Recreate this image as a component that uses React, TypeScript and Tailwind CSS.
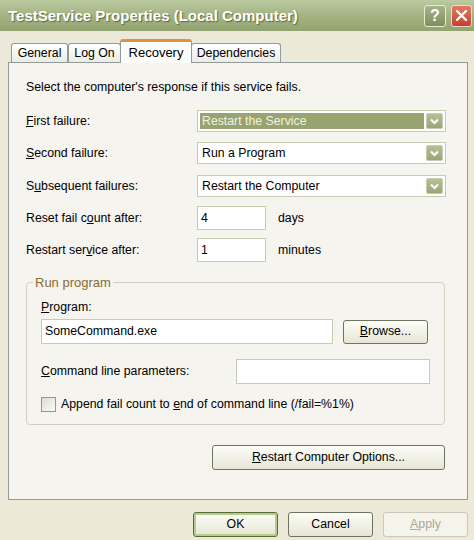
import type { ReactNode } from 'react';

const font = { fontFamily: '"Liberation Sans", Arial, sans-serif' };

export default function App() {
  return (
    <div className="h-[540px] w-[474px] overflow-hidden bg-[#ece9d8] text-[12.3px] leading-[15px] text-black" style={font}>
      <TitleBar />

      <div className="flex h-[31px] items-end pl-[11px]">
        <Tab label="General" width={57} />
        <Tab label="Log On" width={53} />
        <Tab label="Recovery" width={72} active />
        <Tab label="Dependencies" width={90} />
      </div>

      <section className="ml-[8px] flex h-[438px] w-[460px] flex-col border border-[#919b9c] bg-[#f5f4ef] px-[17px]">
        <p className="mt-[17px]">Select the computer's response if this service fails.</p>

        <FormRow className="mt-[15px]" label={<><u>F</u>irst failure:</>}>
          <Select value="Restart the Service" selected />
        </FormRow>
        <FormRow className="mt-[10px]" label={<><u>S</u>econd failure:</>}>
          <Select value="Run a Program" />
        </FormRow>
        <FormRow className="mt-[11px]" label={<>S<u>u</u>bsequent failures:</>}>
          <Select value="Restart the Computer" />
        </FormRow>
        <FormRow className="mt-[9px] h-[24px]" label={<>Reset fail c<u>o</u>unt after:</>}>
          <TextBox value="4" className="h-[24px] w-[69px]" />
          <span className="ml-[12px]">days</span>
        </FormRow>
        <FormRow className="mt-[8px] h-[24px]" label={<>Restart ser<u>v</u>ice after:</>}>
          <TextBox value="1" className="h-[24px] w-[69px]" />
          <span className="ml-[12px]">minutes</span>
        </FormRow>

        <fieldset className="mt-[13px] h-[150px] w-[419px] rounded-[4px] border border-[#d0d0bf] px-[14px]">
          <legend className="-ml-[8px] px-[2px] text-[13px] text-[#8a6a32]">Run program</legend>
          <p className="mt-[10px]"><u>P</u>rogram:</p>
          <div className="mt-[4px] flex items-center">
            <TextBox value="SomeCommand.exe" className="h-[25px] w-[292px]" />
            <XpButton className="ml-[10px] h-[24px] w-[85px]"><u>B</u>rowse...</XpButton>
          </div>
          <div className="mt-[15px] flex items-center justify-between">
            <span><u>C</u>ommand line parameters:</span>
            <TextBox value="" className="h-[25px] w-[194px]" />
          </div>
          <label className="mt-[13px] flex items-center">
            <span className="h-[15px] w-[15px] border border-[#8f9a8a] bg-gradient-to-br from-[#dcdcd2] to-[#fbfbf8]" />
            <span className="ml-[5px]">Append fail count to <u>e</u>nd of command line (/fail=%1%)</span>
          </label>
        </fieldset>

        <div className="mt-[20px] flex justify-end pr-[5px]">
          <XpButton className="h-[25px] w-[233px]"><u>R</u>estart Computer Options...</XpButton>
        </div>
      </section>

      <div className="mt-[12px] flex justify-end gap-[10px] pr-[6px]">
        <XpButton className="h-[25px] w-[85px]" primary>OK</XpButton>
        <XpButton className="h-[25px] w-[85px]">Cancel</XpButton>
        <XpButton className="h-[25px] w-[85px]" disabled><u>A</u>pply</XpButton>
      </div>
    </div>
  );
}

function TitleBar() {
  return (
    <div className="flex h-[31px] items-center justify-between bg-gradient-to-b from-[#bccaa0] via-[#a3b383] to-[#93a36f] pl-[8px] pr-[2px]">
      <h1 className="text-[15px] font-bold text-white [text-shadow:1px_1px_1px_#5d6b40]">TestService Properties (Local Computer)</h1>
      <div className="flex items-center gap-[5px]">
        <span className="grid h-[22px] w-[22px] place-items-center rounded-[3px] border border-[#e6ecd6] bg-gradient-to-b from-[#a7b489] to-[#7f8e5c] text-[16px] font-bold text-white">?</span>
        <span className="grid h-[22px] w-[21px] place-items-center rounded-[3px] border border-[#f1d9cf] bg-gradient-to-b from-[#e07a62] to-[#c2412c]">
          <svg width="13" height="13" viewBox="0 0 13 13">
            <path d="M2 2 L11 11 M11 2 L2 11" stroke="white" strokeWidth="2.4" strokeLinecap="round" />
          </svg>
        </span>
      </div>
    </div>
  );
}

function Tab({ label, width, active }: { label: string; width: number; active?: boolean }) {
  if (active) {
    return (
      <div
        className="relative z-10 -mb-px -mx-[1px] flex h-[24px] items-center justify-center rounded-t-[3px] border-x border-t-[3px] border-x-[#919b9c] border-t-[#e3913a] bg-[#fcfcfa] text-[13px]"
        style={{ width }}
      >
        {label}
      </div>
    );
  }
  return (
    <div
      className="flex h-[19px] items-center justify-center rounded-t-[3px] border-x border-t border-[#919b9c] bg-gradient-to-b from-white to-[#ecebe4] text-[12.3px]"
      style={{ width }}
    >
      {label}
    </div>
  );
}

function FormRow({ label, children, className }: { label: ReactNode; children: ReactNode; className?: string }) {
  return (
    <div className={`flex h-[22px] items-center ${className ?? ''}`}>
      <span className="w-[171px]">{label}</span>
      {children}
    </div>
  );
}

function Select({ value, selected }: { value: string; selected?: boolean }) {
  return (
    <div className="flex h-[22px] w-[249px] items-stretch border border-[#c6ccb2] bg-white p-[2px]">
      <span className={`flex flex-1 items-center pl-[2px] ${selected ? 'bg-[#98a470] text-[#eef1e2]' : ''}`}>{value}</span>
      <span className="ml-[2px] grid w-[17px] place-items-center rounded-[2px] border border-[#c5cdb1] bg-gradient-to-b from-[#b6c196] to-[#98a674]">
        <svg width="9" height="7" viewBox="0 0 9 7">
          <path d="M1 1.5 L4.5 5 L8 1.5" fill="none" stroke="white" strokeWidth="2" />
        </svg>
      </span>
    </div>
  );
}

function TextBox({ value, className }: { value: string; className?: string }) {
  return <div className={`flex items-center border border-[#c6ccb2] bg-white pl-[3px] ${className ?? ''}`}>{value}</div>;
}

function XpButton({
  children,
  className,
  primary,
  disabled,
}: {
  children: ReactNode;
  className?: string;
  primary?: boolean;
  disabled?: boolean;
}) {
  const tone = disabled
    ? 'border-[#cac8bb] bg-[#f5f4ea] text-[#aca899]'
    : primary
      ? 'border-[#566b36] bg-gradient-to-b from-[#fdfdf8] to-[#e6e5d5] shadow-[inset_0_0_0_2px_#b4cc8c]'
      : 'border-[#6d7560] bg-gradient-to-b from-[#fdfdf8] to-[#e6e5d5]';
  return (
    <button className={`flex items-center justify-center rounded-[3px] border text-[12.3px] ${tone} ${className ?? ''}`}>
      <span>{children}</span>
    </button>
  );
}
